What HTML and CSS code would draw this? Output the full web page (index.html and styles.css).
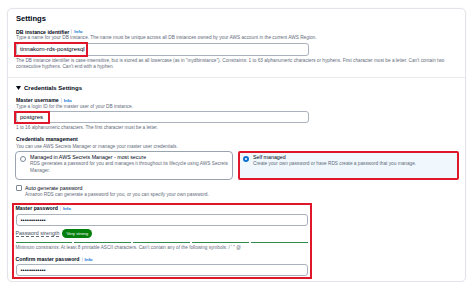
FILE: index.html
```html
<!DOCTYPE html>
<html>
<head>
<meta charset="utf-8">
<link rel="stylesheet" href="styles.css">
</head>
<body>
<div class="panel">
  <section class="sec first">
    <h2 class="title">Settings</h2>
    <div class="label-row mt4"><span class="label">DB instance identifier</span><span class="sep"></span><span class="info">Info</span></div>
    <div class="desc">Type a name for your DB instance. The name must be unique across all DB instances owned by your AWS account in the current AWS Region.</div>
    <div class="input-wrap w-full mt2"><div class="input h13">tinnakorn-rds-postgresql</div><span class="mark mark-id"></span></div>
    <div class="help">The DB instance identifier is case-insensitive, but is stored as all lowercase (as in "mydbinstance"). Constraints: 1 to 63 alphanumeric characters or hyphens. First character must be a letter. Can't contain two consecutive hyphens. Can't end with a hyphen.</div>
  </section>
  <section class="sec second">
    <div class="exp-title"><svg class="caret" width="5" height="4" viewBox="0 0 5 4"><polygon points="0,0 5,0 2.5,4" fill="#000716"/></svg><span>Credentials Settings</span></div>

    <div class="label-row mt45"><span class="label">Master username</span><span class="sep"></span><span class="info">Info</span></div>
    <div class="desc">Type a login ID for the master user of your DB instance.</div>
    <div class="input-wrap w-full mt15"><div class="input">postgres</div><span class="mark mark-user"></span></div>
    <div class="help help2">1 to 16 alphanumeric characters. The first character must be a letter.</div>

    <div class="label-row mt45"><span class="label">Credentials management</span></div>
    <div class="desc mt15">You can use AWS Secrets Manager or manage your master user credentials.</div>
    <div class="cards">
      <div class="card">
        <span class="radio"></span>
        <div class="card-text">
          <div class="card-title">Managed in AWS Secrets Manager - most secure</div>
          <div class="card-desc">RDS generates a password for you and manages it throughout its lifecycle using AWS Secrets Manager.</div>
        </div>
      </div>
      <div class="card selected">
        <span class="radio on"></span>
        <div class="card-text">
          <div class="card-title">Self managed</div>
          <div class="card-desc">Create your own password or have RDS create a password that you manage.</div>
        </div>
      </div>
    </div>

    <div class="check-row">
      <span class="checkbox"></span>
      <div>
        <div class="check-label">Auto generate password</div>
        <div class="desc">Amazon RDS can generate a password for you, or you can specify your own password.</div>
      </div>
    </div>

    <div class="pw-box">
      <div class="label-row"><span class="label">Master password</span><span class="sep"></span><span class="info">Info</span></div>
      <div class="input pw mt25">••••••••••••</div>
      <div class="strength">
        <span class="strength-label">Password strength</span>
        <span class="badge">Very strong</span>
      </div>
      <div class="bars"><span></span><span></span><span></span><span></span><span></span></div>
      <div class="help cons">Minimum constraints: At least 8 printable ASCII characters. Can't contain any of the following symbols: / ' " @</div>
      <div class="label-row mt6"><span class="label">Confirm master password</span><span class="sep"></span><span class="info">Info</span></div>
      <div class="input pw mt15">••••••••••••</div>
    </div>
  </section>
</div>
</body>
</html>
```

FILE: styles.css
```css
body {
  margin: 0;
  font-family: "Liberation Sans", Arial, sans-serif;
  color: #000716;
  background: #ffffff;
}

.panel {
  margin: 8px 0 0 7px;
  width: 459px;
  box-sizing: border-box;
  border: 1px solid #e1e4e8;
  border-radius: 5px;
  box-shadow: 0 0 2px rgba(0, 7, 22, 0.06);
}

.sec {
  padding: 0 8px;
}

.first {
  padding-top: 5px;
  padding-bottom: 8px;
}

.second {
  border-top: 1px solid #e9ebed;
  padding-top: 5px;
  padding-bottom: 2px;
}

.title {
  margin: 0;
  font-size: 7.6px;
  font-weight: 700;
  line-height: 10px;
}

.label-row {
  display: flex;
  align-items: center;
  height: 7px;
}

.label {
  font-size: 5.2px;
  font-weight: 700;
  color: #000716;
}

.sep {
  width: 1px;
  height: 5px;
  background: #dde1e5;
  margin: 0 2px;
}

.info {
  font-size: 4.4px;
  font-weight: 700;
  color: #0972d3;
}

.desc {
  font-size: 4.75px;
  line-height: 6px;
  color: #5f6b7a;
}

.help {
  margin-top: 2px;
  max-width: 436px;
  font-size: 4.7px;
  line-height: 5.5px;
  color: #5f6b7a;
}

.help2 {
  line-height: 6px;
}

.mt2 { margin-top: 2px; }
.mt4 { margin-top: 4px; }
.mt45 { margin-top: 4.5px; }
.mt15 { margin-top: 1.5px; }
.mt25 { margin-top: 2.5px; }
.mt6 { margin-top: 6px; }

.input-wrap {
  position: relative;
}

.w-full {
  width: 293px;
}

.input {
  height: 12px;
  box-sizing: border-box;
  border: 1px solid #a9b1bc;
  border-radius: 3px;
  padding-left: 3px;
  font-size: 6px;
  line-height: 10px;
  color: #000716;
  background: #ffffff;
}

.h13 {
  height: 13px;
  line-height: 11px;
}

.mark {
  position: absolute;
  box-sizing: border-box;
  border: 2px solid #e0162b;
}

.mark-id {
  left: -2px;
  top: -1px;
  width: 74px;
  height: 15px;
}

.mark-user {
  left: -2px;
  top: -0.5px;
  width: 36px;
  height: 13px;
}

.exp-title {
  display: flex;
  align-items: center;
  gap: 3px;
  height: 9px;
  font-size: 6px;
  font-weight: 700;
}

.caret {
  display: block;
}

.cards {
  display: grid;
  grid-template-columns: 218px 1fr;
  gap: 5px;
  margin: 1px 0 0 -1px;
  width: 444px;
  height: 29px;
}

.card {
  display: flex;
  align-items: flex-start;
  gap: 4px;
  box-sizing: border-box;
  border: 1px solid #9aa4b1;
  border-radius: 4px;
  padding: 2px 4px 0 4px;
  background: #ffffff;
}

.card.selected {
  border: 2px solid #e0162b;
  border-radius: 2px;
  padding: 1px 3px 0 3px;
  background: #f0f8fd;
}

.radio {
  flex: none;
  width: 6px;
  height: 6px;
  margin-top: 2px;
  box-sizing: border-box;
  border: 1px solid #7d8998;
  border-radius: 50%;
  background: #ffffff;
}

.radio.on {
  border: 2px solid #0972d3;
}

.card-title {
  font-size: 5.3px;
  line-height: 7px;
  color: #000716;
}

.card-desc {
  font-size: 4.75px;
  line-height: 6.5px;
  color: #5f6b7a;
}

.check-row {
  display: flex;
  align-items: flex-start;
  gap: 3px;
  margin-top: 4.5px;
}

.checkbox {
  flex: none;
  width: 6px;
  height: 6px;
  margin-top: 0.5px;
  box-sizing: border-box;
  border: 1px solid #7d8998;
  border-radius: 1px;
}

.check-label {
  font-size: 5.3px;
  line-height: 7px;
}

.pw-box {
  margin: 5px 0 0 -4px;
  width: 300px;
  box-sizing: border-box;
  border: 2px solid #e0162b;
  padding: 0 2px 1px 1.5px;
}

.pw {
  width: 292.5px;
  padding-left: 4px;
  color: #000716;
}

.strength {
  display: flex;
  align-items: center;
  gap: 3px;
  height: 10px;
  margin-top: 2px;
}

.strength-label {
  font-size: 5.3px;
  line-height: 6px;
  color: #414d5c;
  border-bottom: 1px dashed #5f6b7a;
}

.badge {
  height: 9px;
  padding: 0 4px;
  border-radius: 5px;
  background: #037f0c;
  color: #ffffff;
  font-size: 4.3px;
  line-height: 9px;
}

.bars {
  display: flex;
  gap: 2px;
  width: 292.5px;
  margin-top: 3.5px;
}

.bars span {
  flex: 1;
  height: 1.5px;
  background: #2f8a4c;
}

.cons {
  margin-top: 1.5px;
  line-height: 5px;
}
```
